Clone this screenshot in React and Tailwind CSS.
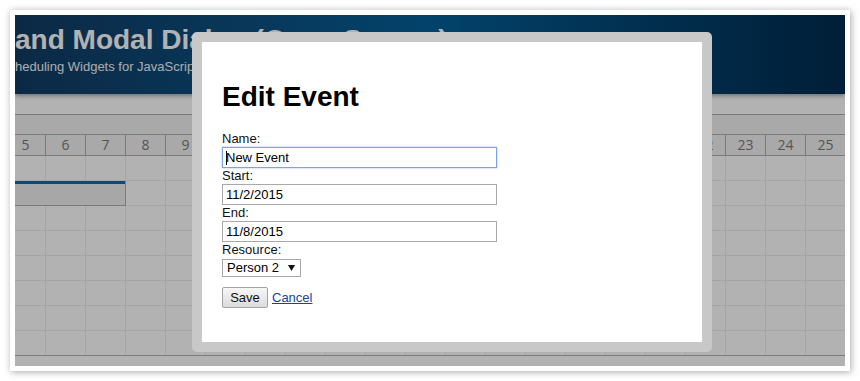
import { useState } from "react";

const days = Array.from({ length: 21 }, (_, i) => i + 5);
const rows = Array.from({ length: 8 }, (_, i) => i);

const Caret = () => (
  <span className="pointer-events-none absolute left-[4px] top-[4px] h-[14px] w-px bg-black" />
);

function Field({ label, value, focused }) {
  return (
    <div>
      <div className="h-[16px] leading-[16px]">{label}</div>
      <div className="relative w-[275px]">
        <input
          readOnly
          value={value}
          className={
            focused
              ? "block h-[21px] w-[275px] border border-[#7ba3e6] bg-white px-[3px] text-[13px] text-black shadow-[0_0_2px_rgba(90,140,230,0.6)] outline-none"
              : "block h-[21px] w-[275px] border border-[#a9a9a9] bg-white px-[3px] text-[13px] text-black outline-none"
          }
        />
        {focused && <Caret />}
      </div>
    </div>
  );
}

const EditEventModal = () => {
  const [resource, setResource] = useState("2");
  return (
    <div className="absolute left-[177px] top-[17px] z-20 h-[320px] w-[520px] rounded-[5px] bg-[#c8c8c8] p-[10px]">
      <div className="h-[300px] w-[500px] bg-white pl-[20px] pt-[39px] font-['Liberation_Sans',Arial,sans-serif] text-[13px] text-[#111]">
        <h1 className="text-[28px] font-bold leading-[32px] text-black">Edit Event</h1>
        <div className="mt-[18px]">
          <Field label="Name:" value="New Event" focused />
          <Field label="Start:" value="11/2/2015" />
          <Field label="End:" value="11/8/2015" />
          <div className="h-[16px] leading-[16px]">Resource:</div>
          <div className="relative mt-px w-[79px]">
            <select
              value={resource}
              onChange={(e) => setResource(e.target.value)}
              className="block h-[18px] w-[79px] appearance-none rounded-none border border-[#a9a9a9] bg-white pl-[4px] text-[13px] leading-[16px] text-black outline-none"
            >
              <option value="1">Person 1</option>
              <option value="2">Person 2</option>
              <option value="3">Person 3</option>
            </select>
            <svg
              viewBox="0 0 7 6"
              className="pointer-events-none absolute left-[66px] top-[6px] h-[6px] w-[7px]"
            >
              <path d="M0 0 H7 L3.5 6 Z" fill="#111" />
            </svg>
          </div>
          <div className="mt-[10px] flex items-center gap-[4px]">
            <button className="h-[21px] w-[46px] rounded-[2px] border border-[#a3a3a3] bg-gradient-to-b from-[#f7f7f7] to-[#dcdcdc] text-[13px] text-[#111]">
              Save
            </button>
            <a href="#" className="text-[13px] text-[#1b4397] underline">
              Cancel
            </a>
          </div>
        </div>
      </div>
    </div>
  );
};

export default function App() {
  return (
    <div className="h-[381px] w-[860px] bg-white p-[10px]">
      <div className="w-[840px] bg-white p-[5px] shadow-[1px_1px_7px_rgba(0,0,0,0.35)]">
        <div className="relative h-[351px] w-[830px] overflow-hidden bg-white">
          {/* page header */}
          <div className="relative z-10 h-[79px] bg-gradient-to-r from-[#103c63] via-[#04609a] to-[#012c50] pt-[9px] text-white shadow-[0_2px_4px_rgba(0,0,0,0.35)]">
            <div className="whitespace-nowrap font-['Liberation_Sans',Arial,sans-serif] text-[28px] font-bold leading-[32px]">
              and Modal Dialog (Open Source)
            </div>
            <div className="mt-[3px] whitespace-nowrap font-['Liberation_Sans',Arial,sans-serif] text-[13px] leading-[15px] text-[#f2f6fa]">
              heduling Widgets for JavaScript
            </div>
          </div>

          {/* scheduler */}
          <div className="h-[21px] border-b border-[#b1b1b1] bg-white" />
          <div className="h-[20px] border-b border-[#b1b1b1] bg-[#f2f2f2]" />
          <div className="-ml-[9px] flex h-[21px] border-b border-[#b1b1b1] bg-[#f2f2f2] font-['Open_Sans',sans-serif] text-[14px] leading-[20px] text-[#7a7a7a]">
            {days.map((d) => (
              <div key={d} className="w-[40px] shrink-0 border-r border-[#b1b1b1] text-center">
                {d}
              </div>
            ))}
          </div>
          <div className="-ml-[9px]">
            {rows.map((r) => (
              <div
                key={r}
                className="relative flex h-[25px] border-b border-[#ededed] last:border-[#b0b0b0]"
              >
                {days.map((d) => (
                  <div key={d} className="w-[40px] shrink-0 border-r border-[#ededed]" />
                ))}
                {r === 1 && (
                  <div className="absolute left-[-120px] top-0 h-[25px] w-[240px] border-b border-r border-[#b0b0b0] bg-[#f0f0f0]">
                    <div className="h-[3px] bg-[#146aa9]" />
                  </div>
                )}
              </div>
            ))}
          </div>
          <div className="h-[10px] bg-white" />

          {/* modal overlay */}
          <div className="absolute inset-0 z-10 bg-black/30" />
          <EditEventModal />
        </div>
      </div>
    </div>
  );
}
